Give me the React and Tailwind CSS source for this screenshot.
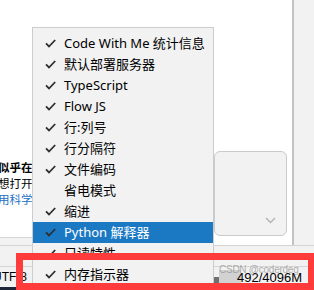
import React from "react";

const items = [
  { label: "Code With Me 统计信息", checked: true },
  { label: "默认部署服务器", checked: true },
  { label: "TypeScript", checked: true },
  { label: "Flow JS", checked: true },
  { label: "行:列号", checked: true },
  { label: "行分隔符", checked: true },
  { label: "文件编码", checked: true },
  { label: "省电模式", checked: false },
  { label: "缩进", checked: true },
  { label: "Python 解释器", checked: true, active: true },
  { label: "只读特性", checked: true },
  { label: "内存指示器", checked: true },
];

function Check() {
  return (
    <svg width="11" height="9" viewBox="0 0 11 9" fill="none">
      <path d="M1 4.4 L4 7.5 L10.2 1" stroke="#2e2e2e" strokeWidth="1.8" />
    </svg>
  );
}

export default function App() {
  return (
    <div
      className="relative w-[314px] h-[290px] overflow-hidden bg-white"
      style={{ fontFamily: '"Noto Sans", "Noto Sans CJK SC", sans-serif' }}
    >
      {/* editor + notification */}
      <div className="flex h-[245px]">
        <div className="w-[292px] flex flex-col">
          <div className="h-[151px]" />
          <div className="flex h-[94px]">
            <div className="flex-1 flex flex-col overflow-hidden">
              <div className="h-[87px] bg-white border-b border-[#d6d6d6] pt-[9px] text-[11.5px] leading-[16px] whitespace-nowrap">
                <div className="-ml-[2px] font-bold text-black">似乎在使用 Python 项目</div>
                <div className="-ml-[2px] text-black">想打开不同的解释器吗</div>
                <div className="-ml-[2px] text-[#2470c6]">用科学模式</div>
              </div>
              <div className="flex-1 bg-[#f2f2f2]" />
            </div>
            <div className="w-[73px] mr-[5px] h-[85px] rounded-[6px] border border-[#cacaca] bg-[#f2f2f2] flex items-end justify-end pr-[10px] pb-[11px]">
              <svg width="11" height="7" viewBox="0 0 11 7" fill="none">
                <path d="M1 1 L5.5 5.5 L10 1" stroke="#b3b3b3" strokeWidth="1.4" />
              </svg>
            </div>
          </div>
        </div>
        <div className="w-[2px] bg-[#c2c2c2]" />
        <div className="flex-1 bg-[#f2f2f2]" />
      </div>

      {/* tool strip */}
      <div className="h-[21px] bg-[#f2f2f2] border-t border-[#d4d4d4]" />

      {/* status bar */}
      <div
        className="h-[21px] bg-[#f2f2f2] border-t border-[#d4d4d4] flex items-center"
        style={{ fontFamily: '"Liberation Sans", Arial, sans-serif' }}
      >
        <span className="-ml-[7px] text-[12px] text-black">UTF-8</span>
        <div className="ml-auto mr-[5px] w-[95px] h-full relative flex items-center">
          <div className="absolute left-0 top-[10px] w-[5px] h-[6px] bg-[#707070]" />
          <div className="absolute left-[5px] top-[3px] w-[22px] bottom-0 bg-[#d2d2d2]" />
          <span className="relative pl-[23px] text-[13px] text-black pt-[2px]">492/4096M</span>
        </div>
      </div>
      <div className="h-[3px] bg-[#1d2538]" />

      {/* popup menu */}
      <div className="absolute left-[32px] top-[27px] w-[182px] h-[280px] bg-[#f2f2f2] border border-[#cccccc] pt-[5px]">
        {items.map((it) => (
          <div
            key={it.label}
            className={
              "flex items-center h-[21px] pl-[12px] text-[13px] whitespace-nowrap " +
              (it.active ? "bg-[#1b79c4] text-white" : "text-black")
            }
          >
            <div className="w-[11px] mr-[8px] flex items-center">
              {it.checked && <Check />}
            </div>
            <span>{it.label}</span>
          </div>
        ))}
      </div>

      {/* annotation box */}
      <div className="absolute left-[16px] top-[253px] w-[299px] h-[37px] border-[7px] border-[#ff3b3b]" />

      {/* watermark */}
      <div
        className="absolute left-[219px] top-[264px] text-[10px] leading-[12px] text-[#8c8c8c]/70 tracking-tight"
        style={{ fontFamily: '"Liberation Sans", Arial, sans-serif' }}
      >
        CSDN @coderdeg
      </div>
    </div>
  );
}
